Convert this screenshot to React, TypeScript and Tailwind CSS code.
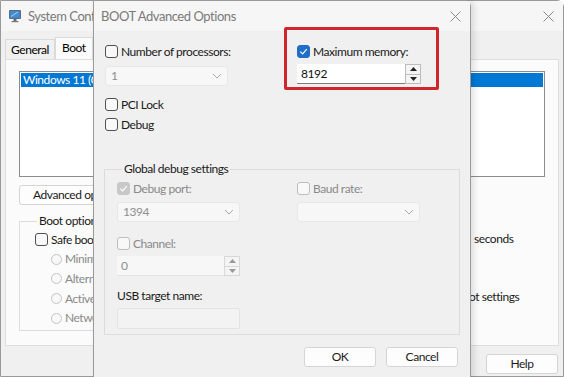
import type { ReactNode } from 'react';

// small Win11-ish widgets

function Check({ checked = false, disabled = false }: { checked?: boolean; disabled?: boolean }) {
  let cls = 'bg-[#f8f8f8] border-[#505050]';
  if (checked && !disabled) cls = 'bg-[#1f6fc8] border-[#1f6fc8]';
  if (checked && disabled) cls = 'bg-[#c8c8c8] border-[#c8c8c8]';
  if (!checked && disabled) cls = 'bg-[#f8f8f8] border-[#bdbdbd]';
  return (
    <span className={`w-[13px] h-[13px] rounded-[3px] border flex items-center justify-center shrink-0 ${cls}`}>
      {checked && (
        <svg width="9" height="9" viewBox="0 0 10 10">
          <path d="M1.5 5.2 L4 7.6 L8.6 2.4" fill="none" stroke="white" strokeWidth="1.3" />
        </svg>
      )}
    </span>
  );
}

function CheckRow({ label, checked, disabled }: { label: string; checked?: boolean; disabled?: boolean }) {
  return (
    <div className="flex items-center h-[13px] gap-[3px] whitespace-nowrap">
      <Check checked={checked} disabled={disabled} />
      <span className={disabled ? 'text-[#8a8a8a]' : 'text-[#1a1a1a]'}>{label}</span>
    </div>
  );
}

function Chevron() {
  return (
    <svg width="10" height="6" viewBox="0 0 10 6">
      <path d="M1 1 L5 5 L9 1" fill="none" stroke="#a8a8a8" strokeWidth="1" />
    </svg>
  );
}

function Combo({ value }: { value: string }) {
  return (
    <div className="w-[123px] h-[20px] bg-[#f7f7f7] border border-[#e8e8e8] rounded-[3px] flex items-center justify-between pl-[5px] pr-[5px] text-[#8e8e8e]">
      <span>{value}</span>
      <Chevron />
    </div>
  );
}

function Arrow({ up, color }: { up?: boolean; color: string }) {
  return (
    <svg width="7" height="4" viewBox="0 0 7 4">
      <path d={up ? 'M0 4 L3.5 0 L7 4 Z' : 'M0 0 L3.5 4 L7 0 Z'} fill={color} />
    </svg>
  );
}

function Spin({ value, active }: { value: string; active?: boolean }) {
  const c = active ? '#222' : '#9a9a9a';
  const btn = active ? 'border-[#bdbdbd] bg-[#f4f4f4]' : 'border-[#d8d8d8] bg-[#f4f4f4]';
  return (
    <div className="flex h-[20px]">
      <div
        className={`flex-1 flex items-center pl-[4px] border-b ${
          active ? 'bg-white border-[#7c7c7c] text-[#111]' : 'bg-[#f7f7f7] border-[#e3e3e3] text-[#8e8e8e]'
        }`}
      >
        {value}
      </div>
      <div className="w-[16px] flex flex-col">
        <div className={`flex-1 flex items-center justify-center border ${btn}`}>
          <Arrow up color={c} />
        </div>
        <div className={`flex-1 flex items-center justify-center border border-t-0 ${btn}`}>
          <Arrow color={c} />
        </div>
      </div>
    </div>
  );
}

function Btn({ children, w = 'w-[72px]' }: { children: ReactNode; w?: string }) {
  return (
    <div className={`${w} h-[20px] bg-[#fdfdfd] border border-[#d4d4d4] rounded-[3px] flex items-center justify-center text-[#1a1a1a] whitespace-nowrap`}>
      {children}
    </div>
  );
}

function CloseX() {
  return (
    <svg width="11" height="11" viewBox="0 0 11 11">
      <path d="M0.5 0.5 L10.5 10.5 M10.5 0.5 L0.5 10.5" stroke="#8a8a8a" strokeWidth="1" />
    </svg>
  );
}

function Radio({ label }: { label: string }) {
  return (
    <div className="flex items-center gap-[3px] h-[13px] whitespace-nowrap">
      <span className="w-[11px] h-[11px] rounded-full border border-[#c4c4c4] bg-[#f8f8f8] shrink-0" />
      <span className="text-[#8a8a8a] w-[28px] overflow-hidden">{label}</span>
    </div>
  );
}

function MsIcon() {
  return (
    <svg width="14" height="14" viewBox="0 0 14 14">
      <rect x="1" y="1" width="12" height="9" rx="1" fill="#5a6b84" />
      <rect x="2.2" y="2.2" width="9.6" height="6.6" fill="#3f8fd6" />
      <path d="M3 7.5 L10 3" stroke="#bfe0ff" strokeWidth="0.8" />
      <rect x="5.5" y="10" width="3" height="2" fill="#6a6a6a" />
      <rect x="3.5" y="12" width="7" height="1.2" fill="#7a7a7a" />
    </svg>
  );
}

export default function App() {
  return (
    <div className="relative w-[569px] h-[377px] overflow-hidden bg-white text-[12px] leading-none tracking-[-0.45px] font-['Lato',sans-serif]">
      {/* ── System Configuration (behind) ── */}
      <div className="absolute left-0 top-0 w-[564px] h-[377px] border border-[#9a9a9a] rounded-tr-[7px] bg-[#f0f0f0] flex flex-col">
        <div className="h-[30px] bg-[#f6f6f6] flex items-center pl-[7px] pr-[9px] shrink-0">
          <MsIcon />
          <span className="ml-[6px] text-[13px] text-[#7a7a7a] w-[66px] overflow-hidden whitespace-nowrap">System Configuration</span>
          <div className="ml-auto">
            <CloseX />
          </div>
        </div>

        {/* tabs */}
        <div className="flex items-end pl-[4px] h-[28px] shrink-0">
          <div className="h-[20px] px-[5px] flex items-center border border-b-0 border-[#dadada] bg-[#f0f0f0]">General</div>
          <div className="h-[22px] px-[6px] flex items-start pt-[4px] border border-b-0 border-[#dadada] bg-[#fbfbfb]">Boot</div>
        </div>

        {/* panel */}
        <div className="mx-[4px] h-[287px] bg-[#fbfbfb] border border-[#dedede] flex flex-col px-[13px] pt-[11px]">
          <div className="h-[106px] border border-[#8c8c8c] bg-white p-[1px]">
            <div className="h-[14px] bg-[#0078d4] text-white flex items-center pl-[2px]">
              <span className="w-[73px] overflow-hidden whitespace-nowrap">Windows 11 (C:\Windows)</span>
            </div>
          </div>

          <div className="flex mt-[8px]">
            <div className="w-[126px] h-[20px] bg-[#fdfdfd] border border-[#d4d4d4] rounded-[3px] flex items-center pl-[13px] text-[#1a1a1a]">
              <span className="w-[62px] overflow-hidden whitespace-nowrap">Advanced options...</span>
            </div>
          </div>

          <div className="flex mt-[10px]">
            <fieldset className="w-[330px] h-[116px] border border-[#dcdcdc] pl-[15px] pr-[8px]">
              <legend className="px-[2px] ml-[2px] text-[#1a1a1a] w-[62px] overflow-hidden whitespace-nowrap">Boot options</legend>
              <div className="flex flex-col gap-[6.7px] mt-[6px]">
                <div className="flex items-center h-[13px] gap-[3px] whitespace-nowrap">
                  <Check />
                  <span className="w-[43px] overflow-hidden text-[#1a1a1a]">Safe boot</span>
                </div>
                <div className="flex flex-col gap-[6.7px] pl-[16px]">
                  <Radio label="Minimal" />
                  <Radio label="Alternate shell" />
                  <Radio label="Active Directory repair" />
                  <Radio label="Network" />
                </div>
              </div>
            </fieldset>

            <div className="flex flex-col ml-[125px] pt-[14px] whitespace-nowrap">
              <div className="flex items-center h-[20px]">
                <span className="text-[#1a1a1a]">seconds</span>
              </div>
              <div className="mt-[42px] flex items-center">
                <span className="ml-[-5px] text-[#1a1a1a]">ot settings</span>
              </div>
            </div>
          </div>
        </div>

        <div className="flex justify-end pr-[5px] mt-[8px]">
          <Btn>Help</Btn>
        </div>
      </div>

      {/* ── BOOT Advanced Options (front) ── */}
      <div className="absolute left-[93px] top-0 w-[378px] h-[392px] bg-[#f0f0f0] border border-[#9a9a9a] rounded-tr-[7px] shadow-[3px_0_6px_rgba(0,0,0,0.12)] flex flex-col">
        <div className="h-[30px] bg-[#f6f6f6] flex items-center pl-[7px] pr-[9px] shrink-0">
          <span className="text-[13px] text-[#7a7a7a]">BOOT Advanced Options</span>
          <div className="ml-auto">
            <CloseX />
          </div>
        </div>

        <div className="flex flex-col px-[10px] pt-[14px]">
          <div className="grid grid-cols-[192px_124px] pl-[1px]">
            <div className="flex flex-col">
              <CheckRow label="Number of processors:" />
              <div className="mt-[8px]">
                <Combo value="1" />
              </div>
              <div className="mt-[12px]">
                <CheckRow label="PCI Lock" />
              </div>
              <div className="mt-[7px]">
                <CheckRow label="Debug" />
              </div>
            </div>
            <div className="flex flex-col">
              <CheckRow label="Maximum memory:" checked />
              <div className="mt-[6px]">
                <Spin value="8192" active />
              </div>
            </div>
          </div>

          <fieldset className="mt-[32px] h-[172px] border border-[#dcdcdc] pl-[12px]">
            <legend className="px-[2px] ml-[5px] text-[#1a1a1a]">Global debug settings</legend>
            <div className="grid grid-cols-[180px_124px] mt-[7px]">
              <div className="flex flex-col">
                <CheckRow label="Debug port:" checked disabled />
                <div className="mt-[7px]">
                  <Combo value="1394" />
                </div>
                <div className="mt-[15px]">
                  <CheckRow label="Channel:" disabled />
                </div>
                <div className="mt-[6px] w-[123px]">
                  <Spin value="0" />
                </div>
              </div>
              <div className="flex flex-col">
                <CheckRow label="Baud rate:" disabled />
                <div className="mt-[7px]">
                  <Combo value="" />
                </div>
              </div>
            </div>
            <div className="mt-[14px] text-[#1a1a1a]">USB target name:</div>
            <div className="mt-[6px] w-[123px] h-[21px] bg-[#f3f3f3] border border-[#e4e4e4] rounded-[2px]" />
          </fieldset>

          <div className="flex justify-end gap-[10px] mt-[12px] pr-[2px]">
            <Btn>OK</Btn>
            <Btn>Cancel</Btn>
          </div>
        </div>
      </div>

      {/* red highlight */}
      <div className="absolute left-[284px] top-[27px] w-[155px] h-[63px] border-[3px] border-[#d0252b] rounded-[2px]" />
    </div>
  );
}
